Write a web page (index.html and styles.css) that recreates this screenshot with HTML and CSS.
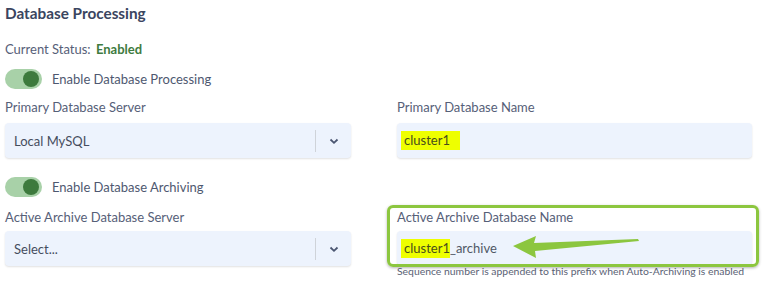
FILE: index.html
```html
<!DOCTYPE html>
<html>
<head>
<meta charset="utf-8">
<link rel="stylesheet" href="styles.css">
</head>
<body>
<div class="page">
  <h2 class="title">Database Processing</h2>
  <div class="status">Current Status: <span class="enabled">Enabled</span></div>
  <div class="toggle-row"><span class="toggle"><span class="knob"></span></span><span class="toggle-label">Enable Database Processing</span></div>
  <div class="grid">
    <div class="field">
      <div class="label">Primary Database Server</div>
      <div class="select"><span class="value">Local MySQL</span><span class="sep"></span><svg class="chev" width="10" height="8" viewBox="0 0 10 8"><path d="M1.5 2.5 L5 5.8 L8.5 2.5" fill="none" stroke="#4a5570" stroke-width="1.8"/></svg></div>
    </div>
    <div class="field">
      <div class="label">Primary Database Name</div>
      <div class="input"><mark class="hl">cluster1</mark></div>
    </div>
  </div>
  <div class="toggle-row second"><span class="toggle"><span class="knob"></span></span><span class="toggle-label">Enable Database Archiving</span></div>
  <div class="grid grid2">
    <div class="field">
      <div class="label">Active Archive Database Server</div>
      <div class="select"><span class="value">Select...</span><span class="sep"></span><svg class="chev" width="10" height="8" viewBox="0 0 10 8"><path d="M1.5 2.5 L5 5.8 L8.5 2.5" fill="none" stroke="#4a5570" stroke-width="1.8"/></svg></div>
    </div>
    <div class="field annotated">
      <div class="label">Active Archive Database Name</div>
      <div class="input short"><mark class="hl hl2">cluster1</mark>_archive</div>
      <div class="help">Sequence number is appended to this prefix when Auto-Archiving is enabled</div>
      <div class="callout"></div>
      <svg class="arrow" width="130" height="26" viewBox="0 0 130 26">
        <path d="M0 10 L23 0 L21 7 L125 3 L126 5 L22 15 L23 22 Z" fill="#8cc63f"/>
      </svg>
    </div>
  </div>
</div>
</body>
</html>
```
FILE: styles.css
```css
* { box-sizing: border-box; }
body { margin: 0; background: #fff; font-family: Lato, "Open Sans", sans-serif; color: #3c4660; }
.page { padding: 0 0 0 5px; width: 768px; height: 285px; overflow: hidden; }
.title { margin: 0; padding-top: 3px; font-size: 15.3px; line-height: 20px; font-weight: 700; color: #3a4560; }
.status { margin-top: 18px; font-size: 13px; line-height: 16px; color: #566078; }
.enabled { color: #3e7b3e; font-weight: 700; margin-left: 2px; }
.toggle-row { display: flex; align-items: center; margin-top: 11px; height: 21px; }
.toggle-row.second { margin-top: 18px; }
.toggle { width: 37px; height: 20px; border-radius: 10px; background: #a8d1a8; position: relative; display: inline-block; }
.knob { position: absolute; right: 3px; top: 2px; width: 16px; height: 16px; border-radius: 50%; background: #3d7a3d; }
.toggle-label { margin-left: 10px; font-size: 13px; color: #4e5870; }
.grid { display: grid; grid-template-columns: 346px 355px; column-gap: 46px; margin-top: 10px; }
.grid2 { margin-top: 12px; }
.field { position: relative; }
.label { font-size: 13px; line-height: 16px; color: #566078; height: 18px; }
.select, .input { margin-top: 6px; height: 35px; background: #edf3fd; border-radius: 4px; box-shadow: 0 1px 2px rgba(0,0,0,0.12); display: flex; align-items: center; font-size: 13px; color: #454d5e; }
.grid2 .select, .grid2 .input { margin-top: 4px; }
.select { padding-left: 9px; }
.select .value { flex: 1; }
.sep { width: 1px; height: 22px; background: #cfd3d9; }
.chev { margin: 0 12px 0 13px; }
.input { padding-left: 4px; }
.hl { background: #eeff00; color: #484d1c; padding: 2px 10px 2px 3px; line-height: 15px; }
.hl2 { padding-right: 0; }
.input.short { height: 34px; color: #505866; }
.help { font-size: 10.4px; line-height: 12px; color: #5a6275; margin-top: 0px; white-space: nowrap; }
.callout { position: absolute; left: -10px; top: -4px; width: 372px; height: 62px; border: 3px solid #8cc63f; border-radius: 6px; box-shadow: 0 1px 3px rgba(0,0,0,0.3); pointer-events: none; }
.arrow { position: absolute; left: 116px; top: 27px; }
```
